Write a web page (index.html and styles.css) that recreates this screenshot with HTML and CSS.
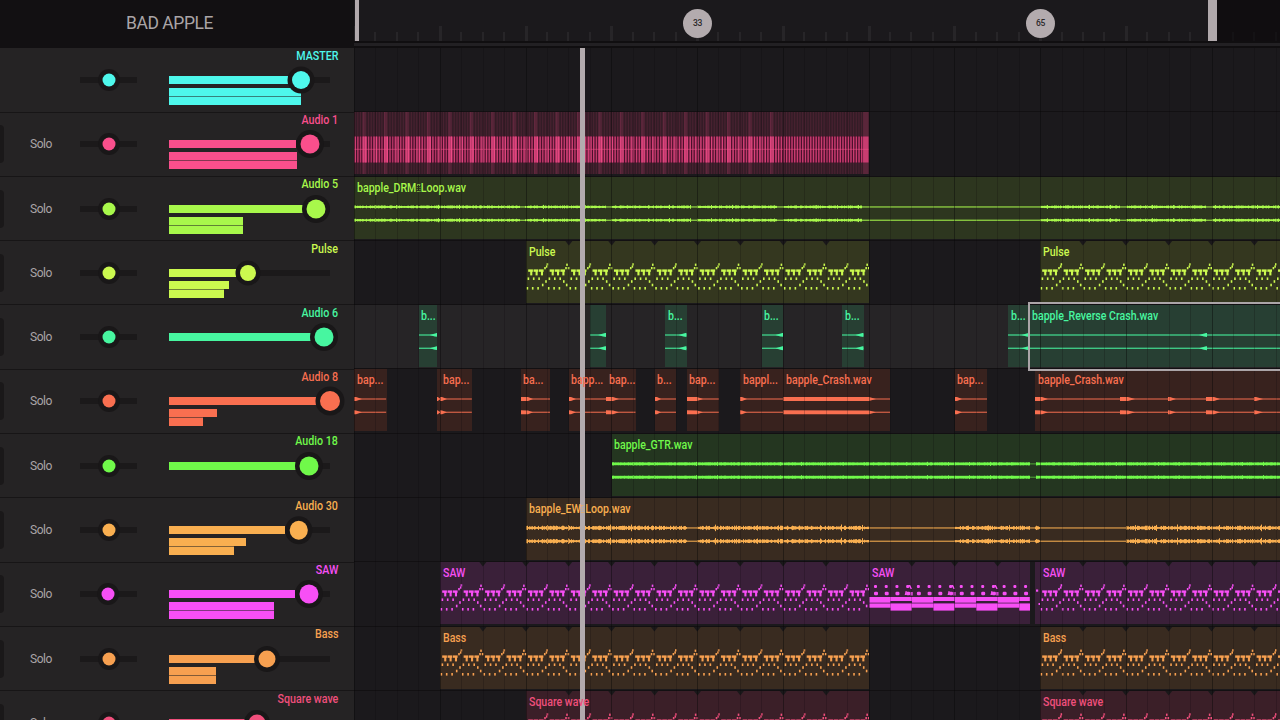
FILE: index.html
```html
<!DOCTYPE html>
<html lang="en">
<head>
    <meta charset="UTF-8">
    <meta name="viewport" content="width=device-width, initial-scale=1.0">
    <title>Bad Apple</title>
    <link rel="stylesheet" href="styles.css">
</head>
<body>
    <div class="app">
        <header class="top">
            <h1 class="title">BAD APPLE</h1>
            <div class="ruler">
                <svg class="ticks" width="926" height="41"></svg>
                <div class="loop-out"></div>
                <div class="loop-start"></div>
                <div class="loop-end"></div>
                <span class="marker" style="left:343px">33</span>
                <span class="marker" style="left:686px">65</span>
            </div>
        </header>
        <main class="body">
            <section class="mixer"></section>
            <section class="lanes"></section>
            <svg class="grid" width="926" height="672"></svg>
            <div class="playhead"></div>
        </main>
    </div>
    <script src="main.js"></script>
</body>
</html>
```
FILE: styles.css
```css
*{
    margin: 0;
    padding: 0;
    box-sizing: border-box;
}
body{
    width: 1280px;
    height: 720px;
    overflow: hidden;
    background: #1b191c;
    color: #aaa5a7;
    font-family: Roboto, "Liberation Sans", sans-serif;
    font-size: 12px;
}
.app{
    height: 720px;
    display: flex;
    flex-direction: column;
}
.top{
    display: flex;
    height: 48px;
    flex: none;
    background: #121012;
}
.title{
    width: 354px;
    padding-right: 15px;
    font-size: 17.5px;
    font-weight: 400;
    letter-spacing: -0.45px;
    line-height: 46px;
    text-align: center;
}
.ruler{
    position: relative;
    flex: 1;
    height: 48px;
    background: linear-gradient(#1b191c 41px, #100e10 41px, #100e10 43px, #222023 43px, #222023 46px, #100e10 46px);
}
.ticks{
    display: block;
}
.loop-out{
    position: absolute;
    left: 863px;
    right: 0;
    top: 0;
    height: 41px;
    background: rgba(10,7,9,0.62);
}
.loop-start,
.loop-end{
    position: absolute;
    top: 0;
    height: 41px;
    background: #b1a9ac;
}
.loop-start{
    left: 0.5px;
    width: 4.5px;
}
.loop-end{
    left: 854px;
    width: 9px;
}
.marker{
    position: absolute;
    top: 9px;
    width: 29px;
    height: 29px;
    margin-left: -14px;
    border-radius: 50%;
    background: #b3abae;
    color: #2c292b;
    font-size: 8.5px;
    font-weight: 500;
    letter-spacing: -0.3px;
    line-height: 29px;
    text-align: center;
}
.body{
    position: relative;
    display: flex;
    height: 672px;
    overflow: hidden;
}
/* left side */
.mixer{
    width: 354px;
    flex: none;
    padding-top: 0.3px;
    background: #252324;
}
.track{
    position: relative;
    display: flex;
    align-items: center;
    height: 64.3px;
    border-bottom: 1px solid #171516;
}
.mute{
    width: 4px;
    height: 38px;
    background: #1a1819;
    border-radius: 0 6px 6px 0;
}
.solo{
    width: 76px;
    padding-left: 26px;
    font-weight: 400;
    letter-spacing: -0.45px;
}
.pan,
.volume{
    position: relative;
    height: 6px;
    background: #1b191a;
}
.pan{
    width: 57px;
}
.volume{
    width: 161px;
    margin-left: 32px;
}
.fill{
    position: absolute;
    left: 0;
    top: -1px;
    height: 8px;
    background: var(--c);
}
.meter{
    position: absolute;
    left: 0;
    height: 8px;
    background: var(--c);
}
.meter.l{
    top: 11px;
}
.meter.r{
    top: 20px;
}
.meter-gap{
    position: absolute;
    left: 0;
    top: 19px;
    height: 1px;
    background: var(--c);
    opacity: 0.45;
}
.knob{
    position: absolute;
    top: 50%;
    border-radius: 50%;
    background: var(--c);
    transform: translate(-50%, -50%);
    box-shadow: 0 0 0 4.5px #191718;
}
.name{
    position: absolute;
    right: 16px;
    top: -0.6px;
    font-weight: 500;
    line-height: 16px;
    color: var(--c);
    transform: scaleX(0.89);
    transform-origin: right;
}
/* arrangement */
.lanes{
    flex: 1;
}
.lane{
    position: relative;
    height: 64.3px;
    border-bottom: 1px solid #121012;
}
.lane.selected{
    background: #262426;
}
.clip{
    position: absolute;
    top: 0;
    height: 62px;
    background: var(--bg);
    color: var(--c);
}
.clip svg{
    display: block;
    position: absolute;
    left: 0;
    top: 0;
    overflow: hidden;
    fill: var(--c);
}
.label{
    position: absolute;
    z-index: 1;
    left: 2.6px;
    top: 3px;
    font-weight: 500;
    line-height: 16px;
    white-space: nowrap;
    transform: scaleX(0.88);
    transform-origin: left;
}
.tofu{
    display: inline-block;
    width: 4px;
    height: 8px;
    margin: 0 0.5px;
    border: 1px dotted var(--c);
    opacity: 0.6;
}
.clip.picked::after{
    content: '';
    position: absolute;
    z-index: 2;
    left: -1.5px;
    right: -4px;
    top: -3px;
    bottom: -4px;
    border: 2px solid #aba5a8;
}
.grid{
    position: absolute;
    left: 354px;
    top: 0;
}
.playhead{
    position: absolute;
    left: 580.4px;
    top: 0;
    width: 4.4px;
    height: 672px;
    background: #b3abae;
}
```
FILE: main.js
```js
var BAR = 10.72      // width of one bar
var END = 87.4       // last bar that is on screen

var tracks = [
    { name: 'MASTER', c: '#4ef8ec', pan: 29, vol: 132, knob: 18, l: 131.5, r: 131.5, clips: [] },
    { name: 'Audio 1', c: '#f94f8c', bg: '#331c26', pan: 29, vol: 140.5, knob: 19, l: 127.5, r: 127.5, clips: [[1, 49, '', 'hits']] },
    { name: 'Audio 5', c: '#a8f84b', bg: '#2d361f', pan: 29, vol: 147, knob: 19, l: 73.5, r: 73.5, clips: [[1, END, 'bapple_DRM<i class="tofu"></i>Loop.wav', 'drums']] },
    { name: 'Pulse', c: '#cbf94f', bg: '#34371f', pan: 29, vol: 79, knob: 16, l: 59.5, r: 54.5, clips: [[17, 49, 'Pulse', 'notes'], [65, END, 'Pulse', 'notes']] },
    { name: 'Audio 6', c: '#47f6a0', bg: '#273f33', pan: 29, vol: 155, knob: 19, l: 0, r: 0, selected: true, clips: [
        [7, 8.75, 'b...', 'reverse'], [23, 24.5, '', 'reverse'], [30, 32, 'b...', 'reverse'], [39, 41, 'b...', 'reverse'],
        [46.5, 48.5, 'b...', 'reverse'], [62, 64, 'b...', 'reverse'], [64, END, 'bapple_Reverse Crash.wav', 'reverse long']] },
    { name: 'Audio 8', c: '#f96f50', bg: '#38221e', pan: 29, vol: 160.5, knob: 20, l: 48, r: 34, clips: [
        [1, 4, 'bap...', 'crash', [[0, 2, 8]]],
        [8.75, 12, 'bap...', 'crash', [[0, 1, 3], [3, 5, 10]], 5.5],
        [16.5, 19.25, 'ba...', 'crash', [[0, 7, 12]]],
        [21, 24.5, 'bapp...', 'crash', [[0, 2, 7]]],
        [24.5, 27.25, 'bap...', 'crash', [[0, 7, 13]]],
        [29, 31, 'b...', 'crash', [[0, 2, 6]]],
        [32, 35, 'bap...', 'crash', [[0, 10, 16]]],
        [37, 41, 'bappl...', 'crash', [[0, 2, 7]]],
        [41, 51, 'bapple_Crash.wav', 'crash', [[0, 86, 93]]],
        [57, 60, 'bap...', 'crash', [[0, 2, 7]]],
        [64.5, END, 'bapple_Crash.wav', 'crash', [[0, 7, 13], [85, 93, 100], [133, 135, 141], [171, 179, 185], [219, 221, 228]]]] },
    { name: 'Audio 18', c: '#70f94a', bg: '#243620', pan: 29, vol: 140, knob: 19, l: 0, r: 0, clips: [[25, END, 'bapple_GTR.wav', 'guitar']] },
    { name: 'Audio 30', c: '#f9af50', bg: '#392b20', pan: 29, vol: 129.5, knob: 18.5, l: 76.5, r: 65, clips: [[17, END, 'bapple_EW<i class="tofu"></i>Loop.wav', 'loop']] },
    { name: 'SAW', c: '#f74ff5', bg: '#3a2039', pan: 27.5, vol: 139.5, knob: 19, l: 104.5, r: 104.5, clips: [[9, 49, 'SAW', 'notes'], [49, 64, 'SAW', 'chords'], [64.5, 65, '', 'stub'], [65, END, 'SAW', 'notes']] },
    { name: 'Bass', c: '#f7a050', bg: '#392b20', pan: 29, vol: 98, knob: 17, l: 46.5, r: 46.5, clips: [[9, 49, 'Bass', 'notes'], [65, END, 'Bass', 'notes']] },
    { name: 'Square wave', c: '#f04f7c', bg: '#3b1f28', pan: 29, vol: 88, knob: 17, l: 0, r: 0, clips: [[17, 49, 'Square wave', 'notes'], [65, END, 'Square wave', 'notes']] }
]

function rect (x, y, w, h, extra) {
    return '<rect x="' + x.toFixed(2) + '" y="' + y + '" width="' + w + '" height="' + h + '" ' + (extra || '') + '/>'
}

// small dark notch at every loop point of a midi clip
function notches (w, first) {
    var s = ''
    for (var x = first; x < w - 2; x += BAR * 4) {
        s += '<path fill="#1a181a" d="M' + (x - 3.5) + ' 0h7l-3.5 4.5z"/>'
    }
    return s
}

function notes (w) {
    var s = notches(w, BAR * 4)
    var dots = [
        [1, 46], [6.3, 46], [11.7, 46], [2, 36.4], [7.3, 36.4], [12.7, 36.4],
        [16.3, 42.7], [19.6, 39.2],
        [23, 36.4], [28.4, 36.4], [33.8, 36.4], [22.3, 46], [27.7, 46], [33, 46],
        [37.4, 39.2], [40.3, 42.7],
        [18.6, 26], [20.3, 24.4], [21, 22.2],
        [39.6, 26], [40.6, 22.6], [42.2, 26]
    ]
    for (var x = 0; x < w; x += BAR * 4) {
        for (var i = 0; i < dots.length; i++) {
            s += rect(x + dots[i][0] - 0.4, dots[i][1], 1.6, i > 15 ? 2.3 : 2.6)
        }
        for (var half = 0; half < 2; half++) {
            for (var t = 0; t < 3; t++) {
                var tx = x + 2.2 + half * 21.44 + t * 5.36
                s += rect(tx, 28.4, 4.7, 2.4) + rect(tx + 2, 30, 2.1, 4.4)
            }
        }
    }
    return s
}

function chords (w) {
    var s = notches(w, BAR * 4)
    for (var i = 0; i < 15; i++) {
        var x = i * BAR + 5
        s += rect(x, 23, 3, 3, 'rx="1"') + rect(x, 29.8, 4, 3.5, 'rx="1.2"')
        if (i % 4 == 3) {
            s += '<path d="M' + (x - 1.5) + ' 33l1-4 1 0 0 4zM' + (x + 2) + ' 23h2l2 4h-1.5zM' + (x + 4.5) + ' 30h2v3.5h-2z"/>'
        }
    }
    s += rect(0, 35, w, 4) + rect(0, 41.3, w, 4.4)
    for (i = 0; i < w; i += BAR * 4) {
        s += rect(i, 38.7, 21.4, 2) + rect(i + 21.4, 42, 21.4, 6.6)
    }
    return s + rect(0, 41, w, 0.8, 'style="fill:#a436a4"')
}

// noisy line round y, from x1 to x2
function noise (x1, x2, y, amp) {
    var s = ''
    for (var x = x1; x < x2; x += 1) {
        var n = Math.abs(Math.sin(x * 12.9898) * 43758.5453) % 1
        var h = 1.5 + n * amp
        if (Math.round(x) % 21 == 0) {
            h += amp * 0.8
        }
        s += rect(x, (y - h / 2).toFixed(2), 1, h.toFixed(2))
    }
    return s
}

function both (draw) {
    return draw(29.9) + draw(43.2)
}

function parts (w, list, amp) {
    return both(function (y) {
        var s = rect(0, y - 0.6, w, 1.3, 'opacity="0.8"')
        for (var i = 0; i < list.length; i++) {
            s += noise(list[i][0], Math.min(list[i][1], w), y, amp)
        }
        return s
    })
}

function crash (w, list) {
    return both(function (y) {
        var s = rect(0, y - 0.6, w, 1.4, 'opacity="0.7"')
        for (var i = 0; i < list.length; i++) {
            var b = list[i]
            s += '<path d="M' + b[0] + ' ' + (y - 2) + 'L' + b[1] + ' ' + (y - 1.8) + 'L' + b[2] + ' ' + y + 'L' + b[1] + ' ' + (y + 2) + 'L' + b[0] + ' ' + (y + 2) + 'z"/>'
        }
        return s
    })
}

function reverse (w, end) {
    return both(function (y) {
        return rect(0, y - 0.6, w, 1.4, 'opacity="0.75"') +
            '<path d="M' + (end - 8) + ' ' + y + 'L' + (end - 1) + ' ' + (y - 2) + 'h1v4l-3 -0.5z"/>'
    })
}

function hits (w) {
    var s = ''
    for (var x = 0.5; x < w - 5; x += 2.68) {
        var o = x > 424 ? 0.7 : 0.45 + (Math.round(x * 7) % 5) * 0.09
        s += rect(x, 24.5, 1.4, 26, 'opacity="' + o + '"')
        s += rect(x, 0, 1.2, 62, 'opacity="0.11"')
    }
    for (x = 8.5; x < 430; x += 21.44) {
        s += rect(x, 24.5, 4, 26, 'opacity="0.6"') + rect(x, 0, 3, 62, 'opacity="0.16"')
        if (x < 410) {
            s += rect(x + 10.7, 24.5, 3.6, 26, 'opacity="0.42"')
        }
    }
    s += rect(w - 5.5, 24.5, 5.5, 26, 'opacity="0.65"') + rect(w - 5.5, 0, 5.5, 62, 'opacity="0.2"')
    return rect(0, 24.5, w, 26, 'style="fill:#4a0f2b"') + s + rect(0, 36.8, w, 1, 'opacity="0.5"')
}

function drawing (kind, w, extra) {
    switch (kind) {
        case 'hits': return hits(w)
        case 'notes': return notes(w)
        case 'chords': return chords(w)
        case 'stub': return rect(1, 27.5, 2.2, 2.2) + rect(3.5, 41, 2, 2)
        case 'reverse': return reverse(w, w)
        case 'reverse long': return reverse(w, 177)
        case 'crash': return crash(w, extra)
        case 'drums': return parts(w, [[0, 166], [171, 252], [257, 337], [343, 423], [429, 508], [686, 766], [772, 852], [858, 926]], 1.5)
        case 'guitar': return both(function (y) {
            return rect(0, y - 1.4, 418, 2.7) + noise(0, 418, y, 1.5) + rect(418, y - 0.5, 6, 1, 'opacity="0.6"') + rect(424, y - 1.4, w, 2.7) + noise(424, w, y, 1.5)
        })
        case 'loop': return parts(w, [[0, 161], [171, 343], [428, 504], [509, 514], [600, 755]], 3)
    }
}

var mixer = document.querySelector('.mixer')
var lanes = document.querySelector('.lanes')

tracks.forEach(function (t, i) {
    var head = '<div class="track" style="--c:' + t.c + '">'
    head += i ? '<div class="mute"></div><span class="solo">Solo</span>' : '<div class="solo"></div><div style="width:4px"></div>'
    head += '<div class="pan"><div class="knob" style="left:' + t.pan + 'px;width:13px;height:13px"></div></div>'
    head += '<div class="volume"><div class="fill" style="width:' + (t.vol - t.knob / 2 - 4) + 'px"></div>'
    if (t.l) {
        head += '<div class="meter l" style="width:' + t.l + 'px"></div><div class="meter-gap" style="width:' + t.r + 'px"></div><div class="meter r" style="width:' + t.r + 'px"></div>'
    }
    head += '<div class="knob" style="left:' + t.vol + 'px;width:' + t.knob + 'px;height:' + t.knob + 'px"></div></div>'
    head += '<span class="name">' + t.name + '</span></div>'
    mixer.innerHTML += head

    var lane = '<div class="lane' + (t.selected ? ' selected' : '') + '" style="--c:' + t.c + ';--bg:' + t.bg + '">'
    t.clips.forEach(function (c) {
        var w = (c[1] - c[0]) * BAR
        lane += '<div class="clip' + (c[3] == 'reverse long' ? ' picked' : '') + '" style="left:' + ((c[0] - 1) * BAR + 0.4).toFixed(2) + 'px;width:' + w.toFixed(2) + 'px">'
        lane += '<svg width="' + w.toFixed(2) + '" height="62">' + drawing(c[3], w, c[4]) + '</svg>'
        if (c[2]) {
            lane += '<span class="label"' + (c[5] ? ' style="left:' + c[5] + 'px"' : '') + '>' + c[2] + '</span>'
        }
        lane += '</div>'
    })
    lanes.innerHTML += lane + '</div>'
})

// ruler ticks and the vertical lines, one for every two bars
var ticks = ''
var lines = ''
for (var k = 0; k < 44; k++) {
    var x = Math.round(k * BAR * 2)
    var big = k % 4 == 0
    ticks += rect(x - 1, big ? 26 : 32, big ? 3 : 2, 15, 'fill="#272528"')
    lines += rect(x, 0, 1, 672, 'fill="#080608" opacity="' + (big ? 0.42 : 0.2) + '"')
}
document.querySelector('.ticks').innerHTML = ticks
document.querySelector('.grid').innerHTML = lines
```
